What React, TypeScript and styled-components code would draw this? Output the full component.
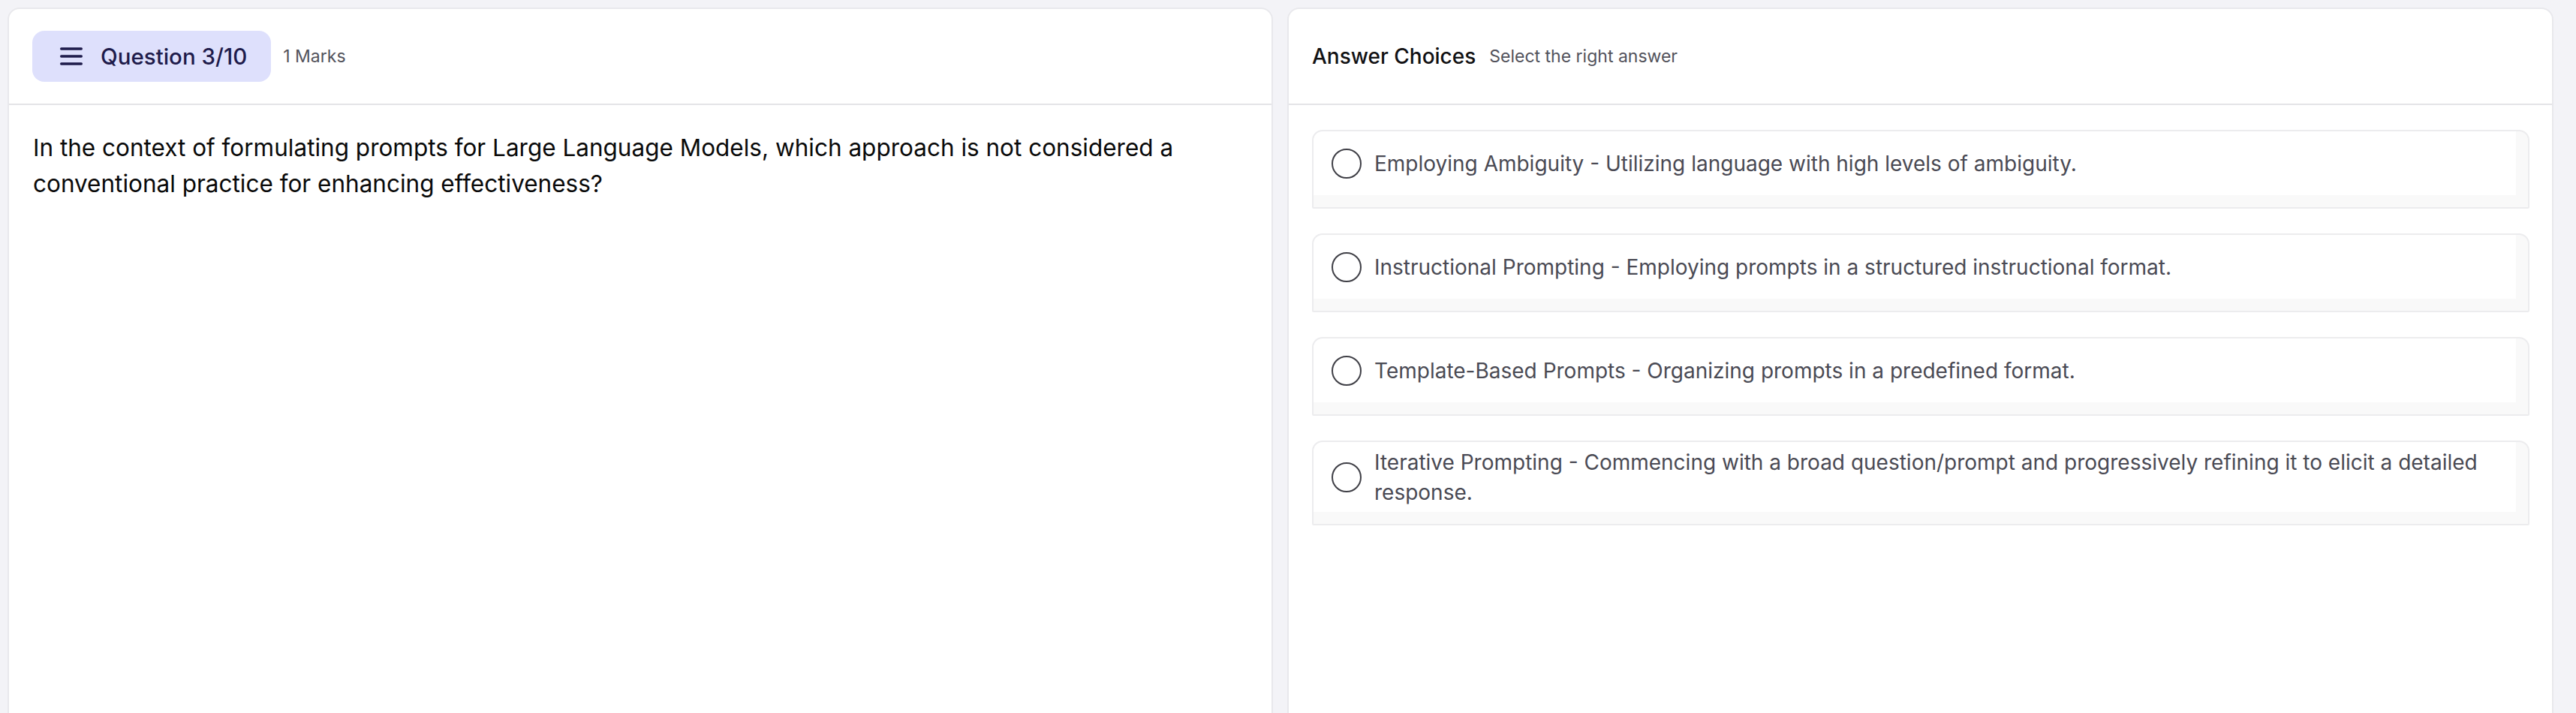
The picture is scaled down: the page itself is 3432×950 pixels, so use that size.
import React from 'react'
import styled, {createGlobalStyle} from 'styled-components'

const choices = [
	'Employing Ambiguity - Utilizing language with high levels of ambiguity.',
	'Instructional Prompting - Employing prompts in a structured instructional format.',
	'Template-Based Prompts - Organizing prompts in a predefined format.',
	'Iterative Prompting - Commencing with a broad question/prompt and progressively refining it to elicit a detailed response.',
]

const MenuIcon = () => (
	<svg width="40" height="40" viewBox="0 0 24 24" fill="none" stroke="#1e1b4b" strokeWidth="2" strokeLinecap="round">
		<line x1="4" y1="6" x2="20" y2="6"/>
		<line x1="4" y1="12" x2="20" y2="12"/>
		<line x1="4" y1="18" x2="20" y2="18"/>
	</svg>
)

export default function App() {
	return <>
		<GlobalStyle/>
		<Page>
			<Panel>
				<PanelHeader>
					<QuestionPill>
						<MenuIcon/>
						<PillText>Question 3/10</PillText>
					</QuestionPill>
					<SubText>1 Marks</SubText>
				</PanelHeader>
				<QuestionText>
					In the context of formulating prompts for Large Language Models, which approach is not considered a conventional practice for enhancing effectiveness?
				</QuestionText>
			</Panel>

			<Panel>
				<PanelHeader>
					<Title>Answer Choices</Title>
					<SubText>Select the right answer</SubText>
				</PanelHeader>
				<ChoiceList>
					{choices.map(c => (
						<Choice key={c}>
							<Radio/>
							<ChoiceLabel>{c}</ChoiceLabel>
						</Choice>
					))}
				</ChoiceList>
			</Panel>
		</Page>
	</>
}

const GlobalStyle = createGlobalStyle`
	* { box-sizing: border-box; }
	body {
		margin: 0;
		background: #f3f3f7;
		font-family: Inter, "Noto Sans", sans-serif;
		overflow: hidden;
	}
`

const Page = styled.div`
	display: grid;
	grid-template-columns: 1686px 1687px;
	gap: 19px;
	padding: 10px 30px 0 10px;
	height: 950px;
	overflow: hidden;
`

const Panel = styled.section`
	background: #fff;
	border: 2px solid #e8e8ec;
	border-radius: 16px 16px 0 0;
	height: 1000px;
`

const PanelHeader = styled.header`
	display: flex;
	align-items: center;
	gap: 16px;
	height: 128px;
	padding: 0 31px;
	border-bottom: 2px solid #e4e4e7;
`

const QuestionPill = styled.div`
	display: flex;
	align-items: center;
	gap: 19px;
	height: 68px;
	padding: 0 32px;
	border-radius: 16px;
	background: #dee0fc;
`

const PillText = styled.span`
	font-size: 29.5px;
	font-weight: 500;
	color: #1e1b4b;
`

const SubText = styled.span`
	font-size: 23px;
	color: #52525b;
`

const Title = styled.span`
	font-size: 28px;
	font-weight: 500;
	color: #111113;
	margin-right: 2px;
`

const QuestionText = styled.p`
	margin: 0;
	padding: 33px 32px;
	font-size: 31.5px;
	line-height: 48px;
	color: #0a0a0a;
`

const ChoiceList = styled.div`
	display: flex;
	flex-direction: column;
	gap: 33px;
	padding: 33px 30px 0 31px;
`

const Choice = styled.div`
	display: flex;
	align-items: center;
	gap: 17px;
	min-height: 105px;
	padding: 7px 40px 22px 24px;
	border: 2px solid #ececee;
	border-radius: 14px 14px 2px 2px;
	background: #fff;
	box-shadow: inset -16px -16px 0 #f9f9f9;
`

const Radio = styled.span`
	flex: none;
	width: 40px;
	height: 40px;
	border-radius: 50%;
	border: 2px solid #3f3f46;
`

const ChoiceLabel = styled.span`
	display: flex;
	align-items: center;
	min-height: 72px;
	font-size: 28px;
	line-height: 40px;
	color: #4a4a54;
`
